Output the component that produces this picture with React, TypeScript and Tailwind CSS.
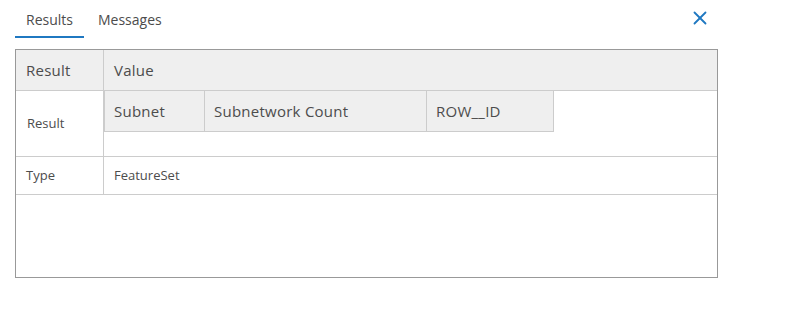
import { X } from 'lucide-react'

// results panel — tool output viewer
export default function App() {
  const font = { fontFamily: '"Open Sans", Lato, sans-serif' }
  return (
    <div className="w-[800px] h-[320px] bg-white text-[#4c4c4c]" style={font}>
      <div className="flex w-[718px] items-start justify-between pl-[15px] pt-[3px]">
        <div className="flex">
          <div className="h-[35px] px-[11px] pt-[7px] text-[14px] leading-[19px] text-[#4c4c4c] border-b-2 border-[#1f78c1]">
            Results
          </div>
          <div className="h-[35px] px-[14px] pt-[7px] text-[14px] leading-[19px] text-[#4c4c4c]">Messages</div>
        </div>
        <X className="mt-[4px] mr-[7px] w-[22px] h-[22px] text-[#1f78c1]" strokeWidth={2} />
      </div>

      <div className="mt-[11px] ml-[15px] w-[703px] h-[229px] border border-[#999999]">
        {/* header */}
        <div className="flex h-[41px] bg-[#efefef] border-b border-[#cccccc] text-[15px] tracking-[0.25px]">
          <div className="w-[88px] border-r border-[#cccccc] pl-[10px] flex items-center">Result</div>
          <div className="flex-1 pl-[10px] flex items-center">Value</div>
        </div>

        {/* result row */}
        <div className="flex h-[66px] border-b border-[#cccccc] text-[13px]">
          <div className="w-[88px] border-r border-[#cccccc] pl-[11px] flex items-center">Result</div>
          <div className="flex-1">
            <div className="flex h-[41px] w-[450px] bg-[#efefef] border-l border-b border-r border-[#cccccc] text-[15px] tracking-[0.25px]">
              <div className="w-[100px] border-r border-[#cccccc] pl-[9px] flex items-center">Subnet</div>
              <div className="w-[222px] border-r border-[#cccccc] pl-[9px] flex items-center">Subnetwork Count</div>
              <div className="flex-1 pl-[9px] flex items-center">ROW__ID</div>
            </div>
          </div>
        </div>

        {/* type row */}
        <div className="flex h-[38px] border-b border-[#cccccc] text-[13px]">
          <div className="w-[88px] border-r border-[#cccccc] pl-[10px] flex items-center">Type</div>
          <div className="flex-1 pl-[10px] flex items-center">FeatureSet</div>
        </div>
      </div>
    </div>
  )
}
